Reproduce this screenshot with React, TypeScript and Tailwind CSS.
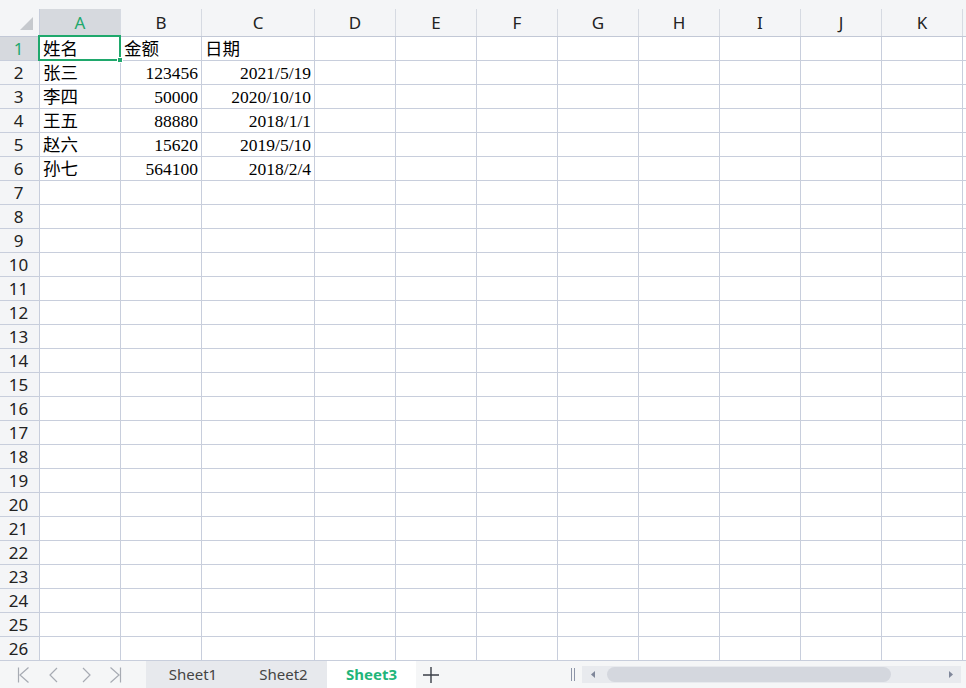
import React from "react";

const COLS = [
  { l: "A", w: "w-[81px]" },
  { l: "B", w: "w-[81px]" },
  { l: "C", w: "w-[113px]" },
  { l: "D", w: "w-[81px]" },
  { l: "E", w: "w-[81px]" },
  { l: "F", w: "w-[81px]" },
  { l: "G", w: "w-[81px]" },
  { l: "H", w: "w-[81px]" },
  { l: "I", w: "w-[81px]" },
  { l: "J", w: "w-[81px]" },
  { l: "K", w: "w-[81px]" },
  { l: "", w: "w-[81px]" },
];

// [text, right-aligned?]
const DATA: [string, boolean][][] = [
  [["姓名", false], ["金额", false], ["日期", false]],
  [["张三", false], ["123456", true], ["2021/5/19", true]],
  [["李四", false], ["50000", true], ["2020/10/10", true]],
  [["王五", false], ["88880", true], ["2018/1/1", true]],
  [["赵六", false], ["15620", true], ["2019/5/10", true]],
  [["孙七", false], ["564100", true], ["2018/2/4", true]],
];

const SANS = "font-['Noto_Sans','Noto_Sans_CJK_SC',sans-serif]";
const CELL = "font-['Liberation_Serif','Noto_Sans_CJK_SC',serif]";

function NavIcon({ d }: { d: string }) {
  return (
    <svg width="14" height="16" viewBox="0 0 14 16" fill="none">
      <path d={d} stroke="#a7abb3" strokeWidth="1.2" />
    </svg>
  );
}

export default function App() {
  return (
    <div className={`relative flex h-[688px] w-[966px] flex-col overflow-hidden bg-white ${SANS}`}>
      {/* Column header */}
      <div className="flex h-[37px] shrink-0 border-b border-[#c2c8d6] bg-[#f4f5f7] pt-[9px]">
        <div className="relative w-[40px] shrink-0 border-r border-[#c8cedc]">
          <svg className="absolute left-[20px] top-[8px]" width="13" height="13" viewBox="0 0 13 13">
            <path d="M13 0 L13 13 L0 13 Z" fill="#c6c9ce" />
          </svg>
        </div>
        {COLS.map((c, i) => (
          <div
            key={i}
            className={`${c.w} flex shrink-0 items-center justify-center border-r border-[#d6dae2] text-[17px] ${
              i === 0 ? "bg-[#d6d9de] text-[#1fa86c]" : "text-[#222]"
            }`}
          >
            {c.l}
          </div>
        ))}
      </div>

      {/* Rows */}
      <div className="flex flex-col">
        {Array.from({ length: 26 }, (_, r) => (
          <div key={r} className="flex h-[24px] shrink-0 border-b border-[#c8cedc]">
            <div
              className={`w-[40px] shrink-0 border-r border-[#c8cedc] pr-[2px] pt-[1px] text-center text-[17px] leading-[22px] ${
                r === 0 ? "bg-[#d6d9de] text-[#1fa86c]" : "bg-[#f4f5f7] text-[#222]"
              }`}
            >
              {r + 1}
            </div>
            {COLS.map((c, ci) => {
              const cell = DATA[r]?.[ci];
              return (
                <div
                  key={ci}
                  className={`${c.w} shrink-0 overflow-hidden whitespace-nowrap border-r border-[#c8cedc] px-[3px] pt-[1px] text-[17.5px] leading-[22px] text-black ${CELL} ${
                    cell && cell[1] ? "text-right" : "text-left"
                  }`}
                >
                  {cell ? cell[0] : ""}
                </div>
              );
            })}
          </div>
        ))}
      </div>

      {/* Selection box on A1 */}
      <div className="absolute left-[38px] top-[35px] h-[26px] w-[83px] border-2 border-[#1fa86c]" />
      <div className="absolute left-[117px] top-[57px] h-[6px] w-[6px] border border-white bg-[#1fa86c]" />

      {/* Bottom bar */}
      <div className="flex h-[27px] shrink-0 items-stretch bg-[#f5f6f7]">
        <div className="flex w-[146px] shrink-0 items-center">
          <div className="ml-[16px]">
            <NavIcon d="M2.5 0.5 V15.5 M12.5 0.5 L4 8 L12.5 15.5" />
          </div>
          <div className="ml-[18px]">
            <NavIcon d="M9 1 L2 8 L9 15" />
          </div>
          <div className="ml-[18px]">
            <NavIcon d="M3 1 L10 8 L3 15" />
          </div>
          <div className="ml-[15px]">
            <NavIcon d="M1.5 0.5 L10 8 L1.5 15.5 M11.5 0.5 V15.5" />
          </div>
        </div>
        <div className="flex w-[94px] shrink-0 items-center justify-center bg-[#e7e9ed] text-[15px] text-[#444]">
          Sheet1
        </div>
        <div className="flex w-[87px] shrink-0 items-center justify-center bg-[#e7e9ed] text-[15px] text-[#444]">
          Sheet2
        </div>
        <div className="flex w-[89px] shrink-0 items-center justify-center bg-white text-[15px] font-bold text-[#1fb57a]">
          Sheet3
        </div>
        <div className="flex w-[30px] shrink-0 items-center justify-center">
          <svg width="16" height="16" viewBox="0 0 16 16">
            <path d="M8 0 V16 M0 8 H16" stroke="#3b3f48" strokeWidth="1.4" />
          </svg>
        </div>
        <div className="flex-1" />
        <div className="flex w-[11px] shrink-0 items-center gap-[2px]">
          <div className="h-[13px] w-px bg-[#8d95a8]" />
          <div className="h-[13px] w-px bg-[#8d95a8]" />
        </div>
        <div className="my-auto mr-[5px] flex h-[17px] w-[379px] shrink-0 items-center bg-[#e8eaee]">
          <svg className="ml-[9px]" width="4" height="7" viewBox="0 0 4 7">
            <path d="M4 0 L0 3.5 L4 7 Z" fill="#7f879a" />
          </svg>
          <div className="ml-[12px] h-[15px] w-[284px] rounded-full bg-[#d4d7de]" />
          <svg className="ml-auto mr-[8px]" width="4" height="7" viewBox="0 0 4 7">
            <path d="M0 0 L4 3.5 L0 7 Z" fill="#7f879a" />
          </svg>
        </div>
      </div>
    </div>
  );
}
